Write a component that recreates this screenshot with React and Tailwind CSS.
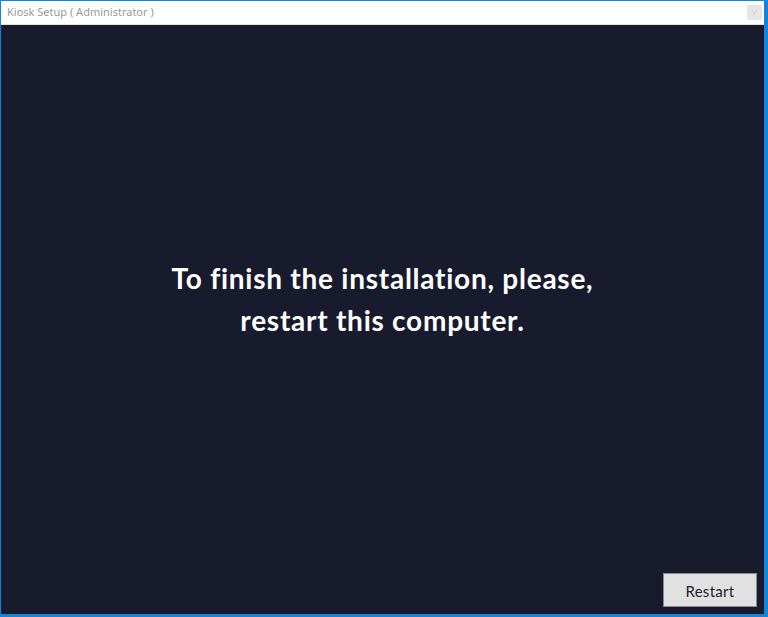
export default function App() {
  return (
    <div className="w-[768px] h-[617px] bg-[#1384dc] pt-px pl-px overflow-hidden">
      <div className="w-[763px] h-[613px] flex flex-col bg-[#181a2e]">
        <div className="h-[24px] bg-white flex items-center justify-between pl-[6px] pr-[2px] border-b border-[#e3e3e3]">
          <span className="text-[11px] text-[#9a9a9a]" style={{ fontFamily: '"Noto Sans", "Open Sans", sans-serif' }}>
            Kiosk Setup ( Administrator )
          </span>
          <div className="w-[15px] h-[15px] bg-[#e6e6e6] flex items-center justify-center">
            <svg width="7" height="7" viewBox="0 0 7 7"><path d="M1 1 L3.5 4 L6 1 M3.5 4 V6.5" stroke="#d0d0d0" fill="none" strokeWidth="1" /></svg>
          </div>
        </div>
        <div className="flex-1 flex flex-col" style={{ fontFamily: 'Lato, "Noto Sans", sans-serif' }}>
          <div className="pt-[232px] flex justify-center">
            <h1 className="text-[28px] leading-[42px] font-bold text-white text-center tracking-[0.75px]">
              To finish the installation, please,
              <br />
              restart this computer.
            </h1>
          </div>
          <div className="flex-1" />
          <div className="flex justify-end pr-[7px] pb-[7px]">
            <button className="w-[94px] h-[34px] pt-[2px] bg-[#e1e1e1] border border-[#8a8a8a] text-[15px] tracking-[0.3px] text-[#222]">
              Restart
            </button>
          </div>
        </div>
      </div>
    </div>
  );
}
